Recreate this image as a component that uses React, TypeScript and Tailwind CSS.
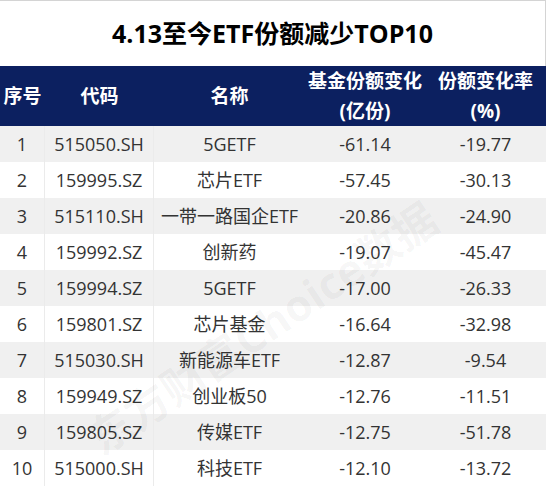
const rows = [
  ["1", "515050.SH", "5GETF", "-61.14", "-19.77"],
  ["2", "159995.SZ", "芯片ETF", "-57.45", "-30.13"],
  ["3", "515110.SH", "一带一路国企ETF", "-20.86", "-24.90"],
  ["4", "159992.SZ", "创新药", "-19.07", "-45.47"],
  ["5", "159994.SZ", "5GETF", "-17.00", "-26.33"],
  ["6", "159801.SZ", "芯片基金", "-16.64", "-32.98"],
  ["7", "515030.SH", "新能源车ETF", "-12.87", "-9.54"],
  ["8", "159949.SZ", "创业板50", "-12.76", "-11.51"],
  ["9", "159805.SZ", "传媒ETF", "-12.75", "-51.78"],
  ["10", "515000.SH", "科技ETF", "-12.10", "-13.72"],
];

const font = { fontFamily: '"Open Sans", "Noto Sans CJK SC", sans-serif' };

const App = () => {
  return (
    <div className="relative w-[546px] h-[487px] overflow-hidden bg-white" style={font}>
      {/* Title */}
      <div className="h-[66px] border-t border-r border-[#d4d4d4] flex items-center justify-center">
        <h1 className="text-[25px] font-bold text-black">4.13至今ETF份额减少TOP10</h1>
      </div>

      {/* Header */}
      <div className="grid grid-cols-[45px_109px_151px_120px_1fr] h-[60px] bg-[#0c2060] text-white font-bold text-[19px] leading-[30px]">
        <div className="flex items-center justify-center">序号</div>
        <div className="flex items-center justify-center">代码</div>
        <div className="flex items-center justify-center">名称</div>
        <div className="flex flex-col items-center justify-center">
          <span>基金份额变化</span>
          <span>(亿份)</span>
        </div>
        <div className="flex flex-col items-center justify-center">
          <span>份额变化率</span>
          <span>(%)</span>
        </div>
      </div>

      {/* Rows */}
      {rows.map((r, i) => (
        <div
          key={r[0]}
          className={`grid grid-cols-[45px_109px_151px_120px_1fr] h-[36px] text-[18px] text-[#333333] ${
            i % 2 === 0 ? "bg-[#f0f0f0]" : "bg-white"
          }`}
        >
          <div className="flex items-center justify-center border-r border-[#ebebeb]">{r[0]}</div>
          <div className="flex items-center justify-center border-r border-[#ebebeb]">{r[1]}</div>
          <div className="flex items-center justify-center whitespace-nowrap">{r[2]}</div>
          <div className="flex items-center justify-center">{r[3]}</div>
          <div className="flex items-center justify-center">{r[4]}</div>
        </div>
      ))}

      {/* Watermark */}
      <div className="absolute left-[262px] top-[328px] -translate-x-1/2 -translate-y-1/2 -rotate-[34deg] whitespace-nowrap text-[44px] font-bold text-black/[0.04] pointer-events-none">
        东方财富Choice数据
      </div>
    </div>
  );
};

export default App;
